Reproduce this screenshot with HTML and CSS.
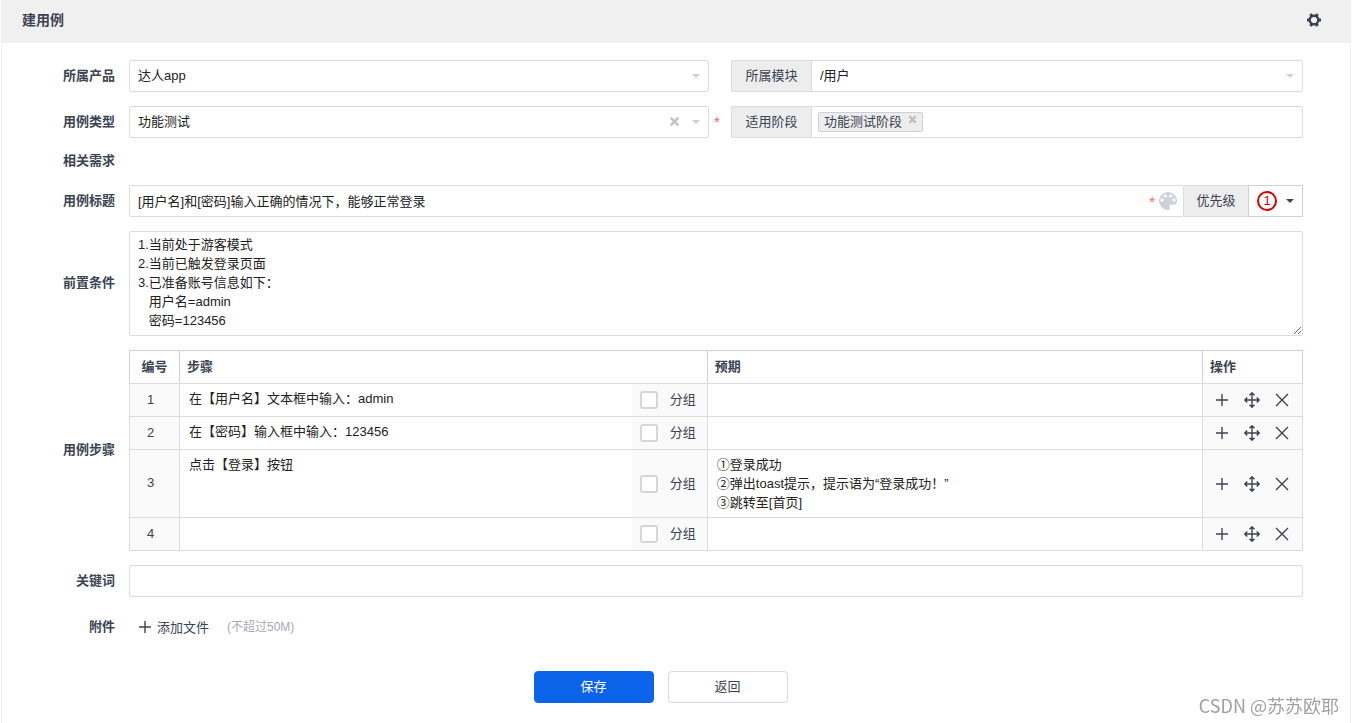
FILE: index.html
```
<!DOCTYPE html>
<html lang="zh-CN">
<head>
    <meta charset="UTF-8">
    <meta name="viewport" content="width=device-width, initial-scale=1.0">
    <title>建用例</title>
    <link rel="stylesheet" href="styles.css">
</head>
<body>
    <!-- 图标 -->
    <svg class="sprite" width="0" height="0" aria-hidden="true">
        <symbol id="icon-caret" viewBox="0 0 8 4"><path d="M0 0h8L4 4z"/></symbol>
        <symbol id="icon-remove" viewBox="0 0 10 10"><path d="M1.5 1.5l7 7M8.5 1.5l-7 7" fill="none" stroke="currentColor" stroke-width="2.4"/></symbol>
        <symbol id="icon-plus" viewBox="0 0 16 16"><path d="M8 2v12M2 8h12" fill="none" stroke="currentColor" stroke-width="1.4"/></symbol>
        <symbol id="icon-close" viewBox="0 0 16 16"><path d="M2 2l12 12M14 2L2 14" fill="none" stroke="currentColor" stroke-width="1.4"/></symbol>
        <symbol id="icon-move" viewBox="0 0 16 16"><path d="M8 1v14M1 8h14M5.5 3.3L8 .8l2.5 2.5M5.5 12.7L8 15.2l2.5-2.5M3.3 5.5L.8 8l2.5 2.5M12.7 5.5L15.2 8l-2.5 2.5" fill="none" stroke="currentColor" stroke-width="1.4"/></symbol>
    </svg>

    <div class="panel">
        <header class="panel-header">
            <h1>建用例</h1>
            <button type="button" class="icon-btn" aria-label="设置">
                <svg width="14" height="14" viewBox="0 0 14 14">
                    <g fill="none" stroke="currentColor">
                        <circle cx="7" cy="7" r="4.3" stroke-width="2.4"/>
                        <path d="M0 7h2.500M11.500 7H14M3.500.9l1.300 2.200M9.200 10.900l1.300 2.200M10.500.9L9.200 3.100M4.800 10.900l-1.300 2.200" stroke-width="3"/>
                    </g>
                </svg>
            </button>
        </header>

        <form class="form">
            <div class="row">
                <label class="row-label" for="product">所属产品</label>
                <div class="row-body">
                    <div class="select-wrap half">
                        <select id="product" class="control"><option>达人app</option></select>
                        <svg class="caret" width="8" height="4"><use href="#icon-caret"/></svg>
                    </div>
                    <span class="required"></span>
                    <div class="group">
                        <label class="addon wide" for="module">所属模块</label>
                        <div class="select-wrap">
                            <select id="module" class="control"><option>/用户</option></select>
                            <svg class="caret" width="8" height="4"><use href="#icon-caret"/></svg>
                        </div>
                    </div>
                </div>
            </div>

            <div class="row">
                <label class="row-label" for="type">用例类型</label>
                <div class="row-body">
                    <div class="select-wrap half">
                        <select id="type" class="control"><option>功能测试</option></select>
                        <button type="button" class="clear" aria-label="清除"><svg width="11" height="11"><use href="#icon-remove"/></svg></button>
                        <svg class="caret" width="8" height="4"><use href="#icon-caret"/></svg>
                    </div>
                    <span class="required">*</span>
                    <div class="group">
                        <label class="addon wide" for="stage">适用阶段</label>
                        <div class="tags control">
                            <span class="tag">功能测试阶段<button type="button" aria-label="移除"><svg width="9" height="9"><use href="#icon-remove"/></svg></button></span>
                            <input type="text" id="stage">
                        </div>
                    </div>
                </div>
            </div>

            <div class="row">
                <span class="row-label">相关需求</span>
            </div>

            <div class="row">
                <label class="row-label" for="title">用例标题</label>
                <div class="row-body">
                    <div class="title-box control">
                        <input type="text" id="title" value="[用户名]和[密码]输入正确的情况下，能够正常登录">
                        <span class="star">*</span>
                        <button type="button" class="palette" aria-label="颜色">
                            <svg width="18" height="18" viewBox="0 0 18 18"><path fill-rule="evenodd" d="M9 0a9 9 0 0 0 0 18c1.5 0 2.1-1 1.8-2.2-.4-1.5-.2-3.3 1.7-3.3 1.4 0 2.6.6 3.9-.3C17.5 11.4 18 10.3 18 9a9 9 0 0 0-9-9zM6.3 2.2a1.7 1.7 0 1 1 0 3.4 1.7 1.7 0 0 1 0-3.4zM11.7 2.2a1.7 1.7 0 1 1 0 3.4 1.7 1.7 0 0 1 0-3.4zM3 6.3a1.7 1.7 0 1 1 0 3.4 1.7 1.7 0 0 1 0-3.4zM15 6.3a1.7 1.7 0 1 1 0 3.4 1.7 1.7 0 0 1 0-3.4z"/></svg>
                        </button>
                    </div>
                    <span class="addon pri-label">优先级</span>
                    <button type="button" class="pri" aria-label="优先级 1">
                        <span class="pri-num">1</span>
                        <svg width="8" height="4"><use href="#icon-caret"/></svg>
                    </button>
                </div>
            </div>

            <div class="row">
                <label class="row-label" for="precondition">前置条件</label>
                <div class="row-body">
                    <textarea id="precondition" class="control precondition" rows="5">1.当前处于游客模式
2.当前已触发登录页面
3.已准备账号信息如下：
   用户名=admin
   密码=123456</textarea>
                </div>
            </div>

            <div class="row">
                <span class="row-label">用例步骤</span>
                <div class="row-body">
                    <table class="steps">
                        <thead>
                            <tr>
                                <th class="col-id">编号</th>
                                <th class="col-step">步骤</th>
                                <th>预期</th>
                                <th class="col-action">操作</th>
                            </tr>
                        </thead>
                        <tbody>
                            <tr>
                                <td class="num">1</td>
                                <td><div class="step"><textarea rows="1" aria-label="步骤1">在【用户名】文本框中输入：admin</textarea><label><input type="checkbox">分组</label></div></td>
                                <td><div class="step"><textarea rows="1" aria-label="预期1"></textarea></div></td>
                                <td class="actions"><div>
                                    <button type="button" aria-label="添加"><svg width="16" height="16"><use href="#icon-plus"/></svg></button>
                                    <button type="button" aria-label="移动"><svg width="16" height="16"><use href="#icon-move"/></svg></button>
                                    <button type="button" aria-label="删除"><svg width="16" height="16"><use href="#icon-close"/></svg></button>
                                </div></td>
                            </tr>
                            <tr>
                                <td class="num">2</td>
                                <td><div class="step"><textarea rows="1" aria-label="步骤2">在【密码】输入框中输入：123456</textarea><label><input type="checkbox">分组</label></div></td>
                                <td><div class="step"><textarea rows="1" aria-label="预期2"></textarea></div></td>
                                <td class="actions"><div>
                                    <button type="button" aria-label="添加"><svg width="16" height="16"><use href="#icon-plus"/></svg></button>
                                    <button type="button" aria-label="移动"><svg width="16" height="16"><use href="#icon-move"/></svg></button>
                                    <button type="button" aria-label="删除"><svg width="16" height="16"><use href="#icon-close"/></svg></button>
                                </div></td>
                            </tr>
                            <tr>
                                <td class="num">3</td>
                                <td><div class="step"><textarea rows="3" aria-label="步骤3">点击【登录】按钮</textarea><label><input type="checkbox">分组</label></div></td>
                                <td><div class="step"><textarea rows="3" aria-label="预期3">①登录成功
②弹出toast提示，提示语为“登录成功！”
③跳转至[首页]</textarea></div></td>
                                <td class="actions"><div>
                                    <button type="button" aria-label="添加"><svg width="16" height="16"><use href="#icon-plus"/></svg></button>
                                    <button type="button" aria-label="移动"><svg width="16" height="16"><use href="#icon-move"/></svg></button>
                                    <button type="button" aria-label="删除"><svg width="16" height="16"><use href="#icon-close"/></svg></button>
                                </div></td>
                            </tr>
                            <tr>
                                <td class="num">4</td>
                                <td><div class="step"><textarea rows="1" aria-label="步骤4"></textarea><label><input type="checkbox">分组</label></div></td>
                                <td><div class="step"><textarea rows="1" aria-label="预期4"></textarea></div></td>
                                <td class="actions"><div>
                                    <button type="button" aria-label="添加"><svg width="16" height="16"><use href="#icon-plus"/></svg></button>
                                    <button type="button" aria-label="移动"><svg width="16" height="16"><use href="#icon-move"/></svg></button>
                                    <button type="button" aria-label="删除"><svg width="16" height="16"><use href="#icon-close"/></svg></button>
                                </div></td>
                            </tr>
                        </tbody>
                    </table>
                </div>
            </div>

            <div class="row">
                <label class="row-label" for="keywords">关键词</label>
                <div class="row-body">
                    <input type="text" id="keywords" class="control">
                </div>
            </div>

            <div class="row">
                <span class="row-label">附件</span>
                <div class="row-body files">
                    <button type="button" class="add-file"><svg width="16" height="16"><use href="#icon-plus"/></svg>添加文件</button>
                    <span class="limit">(不超过50M)</span>
                </div>
            </div>

            <div class="form-actions">
                <button type="submit" class="btn btn-primary">保存</button>
                <button type="button" class="btn">返回</button>
            </div>
        </form>
    </div>
    <div class="watermark">CSDN @苏苏欧耶</div>
</body>
</html>
```
FILE: styles.css
```
* {
    box-sizing: border-box;
}
body {
    margin: 0;
    font-family: "Liberation Sans", "Noto Sans CJK SC", sans-serif;
    font-size: 13px;
    line-height: 19px;
    color: #3c4353;
    background-color: #fff;
}
button, input, select, textarea {
    font: inherit;
    color: inherit;
    margin: 0;
    padding: 0;
    border: none;
    background: none;
    outline: none;
}
button {
    cursor: pointer;
}
svg {
    display: block;
    fill: currentColor;
}
.sprite {
    position: absolute;
}
.panel {
    margin: 0 2px 0 1px;
    min-height: 100vh;
    border: 1px solid #efefef;
    border-width: 0 1px;
}
.panel-header {
    display: flex;
    justify-content: space-between;
    align-items: center;
    height: 43px;
    padding: 0 29px 4px 20px;
    background-color: #f0f0f0;
}
.panel-header h1 {
    margin: 0;
    font-size: 14px;
    line-height: 20px;
}

/* 表单 */
.form {
    display: flex;
    flex-direction: column;
    gap: 14px;
    padding: 17px 47px 20px 20px;
}
.row {
    display: flex;
    align-items: center;
}
.row-label {
    flex: none;
    width: 107px;
    padding: 0 14px 2px 0;
    line-height: 17px;
    text-align: right;
    font-weight: bold;
}
.row-body {
    flex: 1;
    display: flex;
    min-width: 0;
}
.control {
    width: 100%;
    height: 32px;
    padding: 0 8px;
    border: 1px solid #dcdcdc;
    border-radius: 2px;
    background-color: #fff;
    color: #222;
}
.select-wrap {
    position: relative;
    flex: 1;
}
.select-wrap.half {
    flex: none;
    width: 49.4%;
}
select {
    display: block;
    appearance: none;
}
select.control {
    padding-bottom: 2px;
}
.caret {
    position: absolute;
    right: 9px;
    top: 14px;
    color: #cbd0db;
    pointer-events: none;
}
.clear {
    position: absolute;
    right: 29px;
    top: 10px;
    color: #c4c4c4;
}
.required {
    flex: none;
    width: 22px;
    padding: 0 5px;
    line-height: 32px;
}
.required, .star {
    color: #ff5d5d;
    font-size: 15px;
}
.group {
    flex: 1;
    display: flex;
}
.group .control {
    border-radius: 0 2px 2px 0;
}
.addon {
    flex: none;
    height: 32px;
    line-height: 30px;
    text-align: center;
    border: 1px solid #dcdcdc;
    border-right: none;
    background-color: #ededed;
}
.addon.wide {
    width: 80px;
    border-radius: 2px 0 0 2px;
}
.tags {
    display: flex;
    align-items: center;
    padding: 0 6px;
}
.tags input {
    flex: 1;
    min-width: 0;
}
.tag {
    display: flex;
    gap: 6px;
    height: 20px;
    padding: 0 5px;
    line-height: 18px;
    color: #3c4353;
    background-color: #ededed;
    border: 1px solid #cbd0db;
    border-radius: 2px;
}
.tag button {
    height: 13px;
    color: #bcbcbc;
}
.title-box {
    display: flex;
    align-items: center;
    flex: 1;
    padding-right: 6px;
}
.title-box input {
    flex: 1;
    min-width: 0;
}
.star {
    padding-right: 4px;
}
.palette {
    color: #cbd0db;
}
.pri-label {
    width: 64px;
    border-left: none;
}
.pri {
    display: flex;
    align-items: center;
    gap: 9px;
    height: 32px;
    padding: 0 8px;
    border: 1px solid #cbd0db;
}
.pri-num {
    width: 20px;
    height: 20px;
    line-height: 16px;
    border: 2px solid #d50000;
    border-radius: 50%;
    color: #d50000;
}
.precondition {
    display: block;
    height: auto;
    padding: 3px 8px 5px;
    resize: vertical;
}

/* 步骤表格 */
.steps {
    width: 100%;
    table-layout: fixed;
    border-collapse: collapse;
}
.steps th {
    height: 33px;
    padding: 0 7px 2px;
    text-align: left;
    border: 1px solid #cbd0db;
    border-bottom-color: #dcdcdc;
}
.steps th.col-id {
    width: 50px;
    text-align: center;
}
.col-step {
    width: 45%;
}
.col-action {
    width: 100px;
}
.steps td {
    padding: 0;
    border: 1px solid #dcdcdc;
}
.steps td.num {
    padding: 0 8px 2px 0;
    text-align: center;
}
.steps .num, .actions {
    background-color: #fafafa;
}
.step {
    display: flex;
}
.step textarea {
    flex: 1;
    min-width: 0;
    min-height: 32px;
    padding: 5px 9px;
    color: #222;
    resize: none;
    overflow: hidden;
}
.step label {
    display: flex;
    align-items: center;
    gap: 12px;
    width: 75px;
    padding-left: 8px;
    line-height: 18px;
    background-color: #fafafa;
}
.step input {
    appearance: none;
    width: 18px;
    height: 18px;
    border: 2px solid #d6d6d6;
    border-radius: 3px;
    background-color: #fff;
}
.step input:checked {
    background-color: #0c64eb;
}
.actions div {
    display: flex;
    gap: 14px;
    padding-left: 11px;
}
.files {
    align-items: center;
    height: 32px;
    padding-left: 8px;
}
.add-file {
    display: flex;
    align-items: center;
    gap: 4px;
}
.limit {
    padding-left: 18px;
    font-size: 12px;
    color: #a6aab8;
}
.form-actions {
    display: flex;
    justify-content: center;
    gap: 14px;
    padding: 14px 4px 0 0;
}
.btn {
    width: 120px;
    height: 32px;
    padding-bottom: 2px;
    border: 1px solid #d8dbe3;
    border-radius: 4px;
}
.btn-primary {
    border-color: #0c64eb;
    background-color: #0c64eb;
    color: #fff;
}
.watermark {
    position: fixed;
    right: 14px;
    bottom: 6px;
    font-family: "Noto Sans CJK SC", sans-serif;
    font-size: 18px;
    line-height: 24px;
    color: #a0a0a0;
    text-shadow: 1px 1px 0 #fff;
}
```
